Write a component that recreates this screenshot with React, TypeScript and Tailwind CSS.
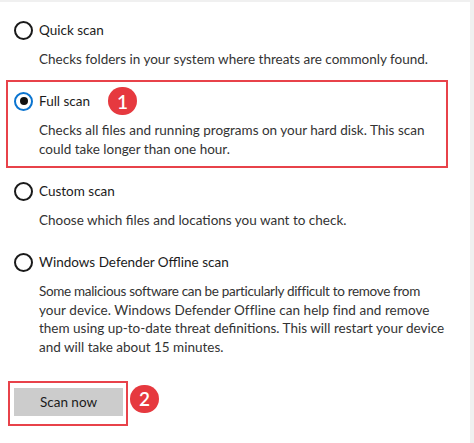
import React from 'react';

const FONT = { fontFamily: 'Lato, "Noto Sans", sans-serif' };

function Radio({ checked }: { checked?: boolean }) {
  if (checked) {
    return (
      <span className="flex h-[19px] w-[19px] shrink-0 items-center justify-center rounded-full border-2 border-[#0a74d0]">
        <span className="h-[8px] w-[8px] rounded-full bg-[#111]" />
      </span>
    );
  }
  return <span className="h-[19px] w-[19px] shrink-0 rounded-full border-2 border-[#1a1a1a]" />;
}

function Title({ label, checked }: { label: string; checked?: boolean }) {
  return (
    <div className="flex h-[20px] items-center gap-[6px]">
      <Radio checked={checked} />
      <span className="text-[13.5px] text-[#1b1b1b]">{label}</span>
    </div>
  );
}

function Badge({ n }: { n: number }) {
  return (
    <span className="flex h-[28px] w-[29px] items-center justify-center rounded-full bg-[#e6393f] text-[19px] font-semibold leading-none text-white">
      {n}
    </span>
  );
}

export default function App() {
  return (
    <div
      className="h-[443px] w-[474px] overflow-hidden border-t-2 border-r-4 border-[#f0f0f0] bg-white px-[6px] pt-[18px]"
      style={FONT}
    >
      {/* Quick scan */}
      <div className="px-[8px]">
        <Title label="Quick scan" />
        <p className="mt-[10px] pl-[25px] text-[13.5px] leading-[19px] text-[#333]">
          Checks folders in your system where threats are commonly found.
        </p>
      </div>

      {/* Full scan, highlighted */}
      <div className="relative mt-[11px] w-[442px] border-2 border-[#e8424a] px-[6px] pt-[9px] pb-[7px]">
        <Title label="Full scan" checked />
        <div className="absolute left-[100px] top-[5px]">
          <Badge n={1} />
        </div>
        <p className="mt-[10px] pl-[25px] pr-[8px] text-[13.5px] leading-[19px] text-[#333]">
          Checks all files and running programs on your hard disk. This scan could take longer than one hour.
        </p>
      </div>

      {/* Custom scan */}
      <div className="mt-[13px] px-[8px]">
        <Title label="Custom scan" />
        <p className="mt-[10px] pl-[25px] text-[13.5px] leading-[19px] text-[#333]">
          Choose which files and locations you want to check.
        </p>
      </div>

      {/* Offline scan */}
      <div className="mt-[22px] px-[8px]">
        <Title label="Windows Defender Offline scan" />
        <p className="mt-[10px] whitespace-nowrap pl-[25px] text-[13.5px] leading-[18.7px] text-[#333]">
          <span className="block tracking-[-0.32px]">Some malicious software can be particularly difficult to remove from</span>
          <span className="block tracking-[0.05px]">your device. Windows Defender Offline can help find and remove</span>
          <span className="block">them using up-to-date threat definitions. This will restart your device</span>
          <span className="block">and will take about 15 minutes.</span>
        </p>
      </div>

      {/* Scan now */}
      <div className="mt-[24px] flex items-start">
        <div className="ml-[2px] w-[120px] border-2 border-[#e8424a] pt-[5px] pb-[8px] pl-[4px] pr-[3px]">
          <button className="h-[28px] w-[109px] bg-[#cccccc] text-[13.5px] text-[#1b1b1b]">Scan now</button>
        </div>
        <div className="ml-[2px] mt-[4px]">
          <Badge n={2} />
        </div>
      </div>
    </div>
  );
}
